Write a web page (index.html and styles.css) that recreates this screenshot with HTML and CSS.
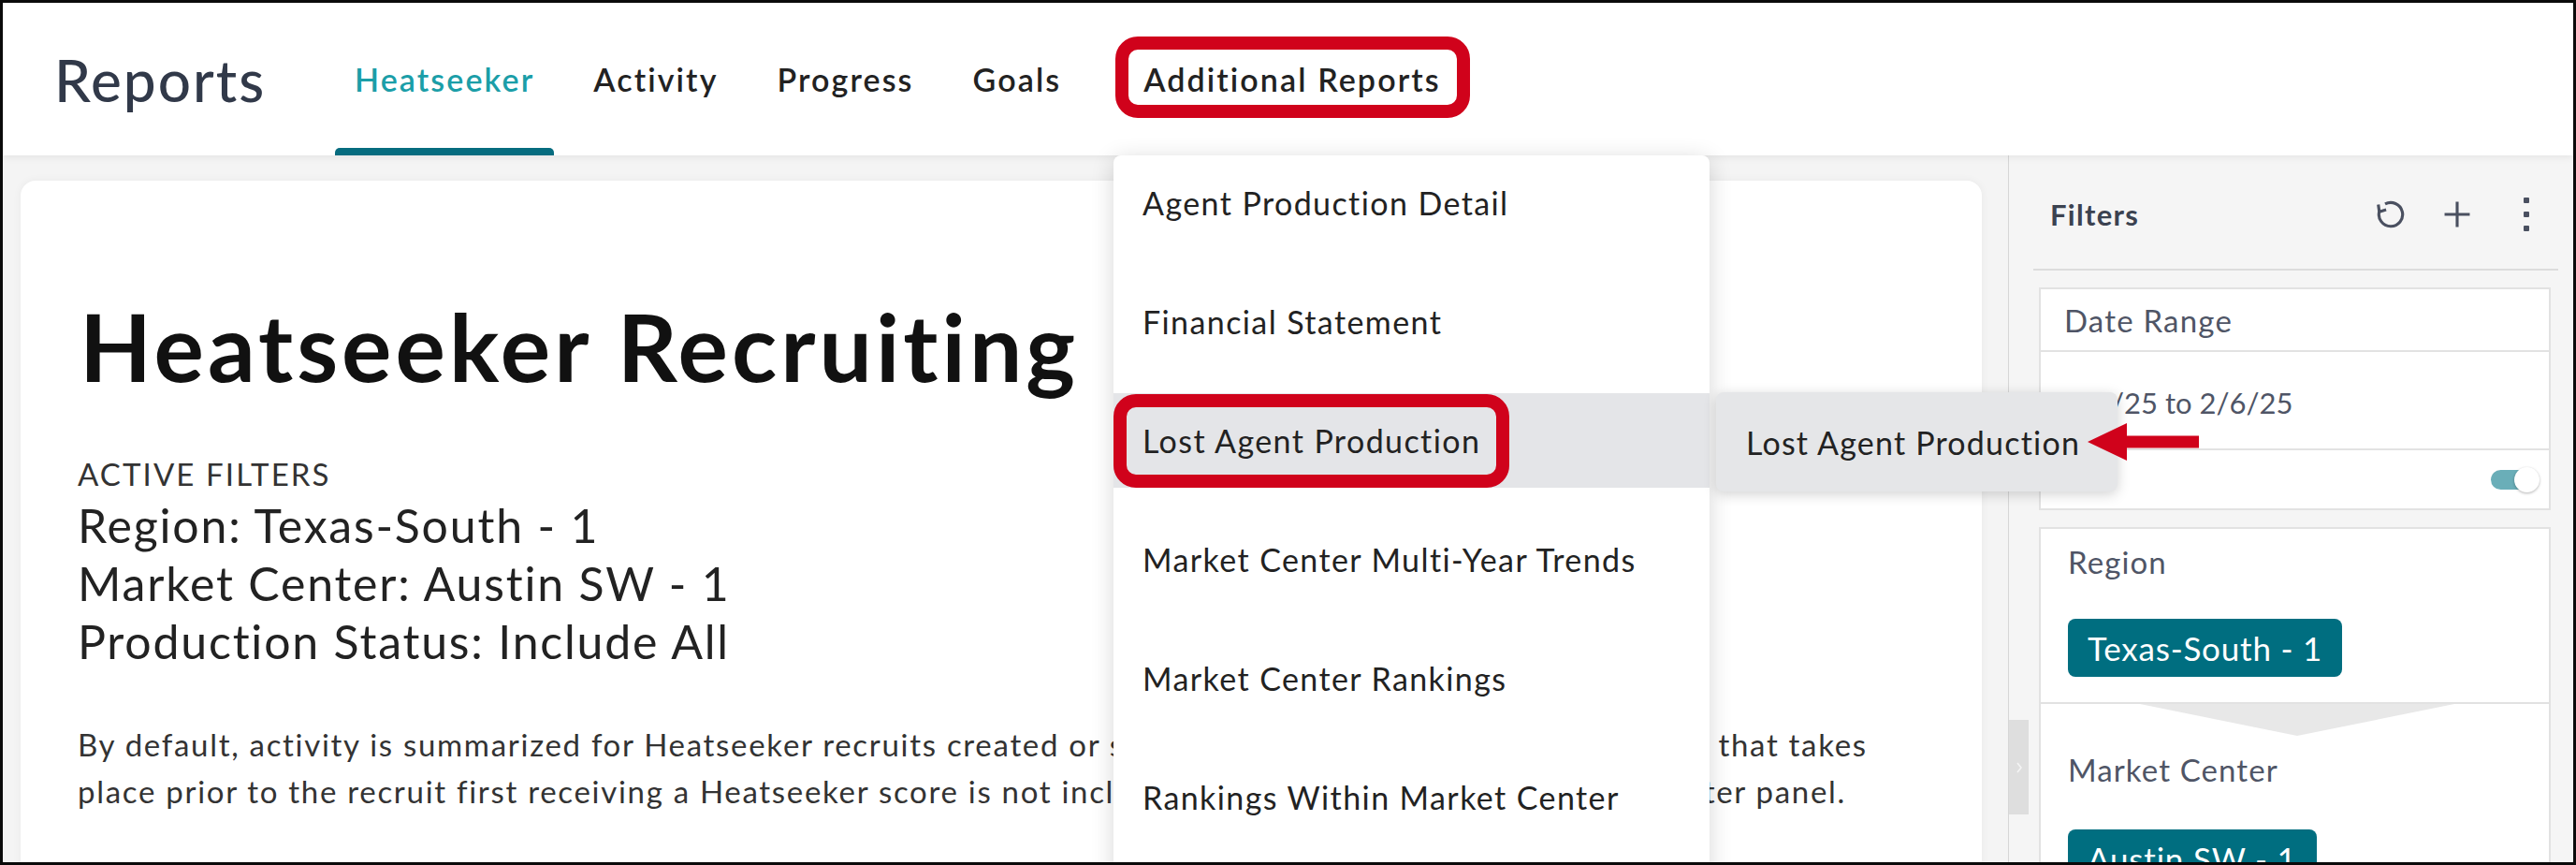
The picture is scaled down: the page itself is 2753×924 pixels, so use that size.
FILE: index.html
```html
<!DOCTYPE html>
<html lang="en">
<head>
<meta charset="utf-8">
<title>Reports - Heatseeker</title>
<link rel="stylesheet" href="styles.css">
</head>
<body>
<div class="frame">
  <header class="topbar">
    <div class="brand">Reports</div>
    <nav class="tabs">
      <a class="tab active">Heatseeker</a>
      <a class="tab">Activity</a>
      <a class="tab">Progress</a>
      <a class="tab">Goals</a>
      <a class="tab tab-more">Additional Reports</a>
    </nav>
  </header>
  <div class="main">
    <main class="content">
      <section class="card">
        <h1 class="title">Heatseeker Recruiting</h1>
        <div class="active-label">ACTIVE FILTERS</div>
        <div class="active-list">
          <div>Region: Texas-South - 1</div>
          <div>Market Center: Austin SW - 1</div>
          <div>Production Status: Include All</div>
        </div>
        <p class="note">By default, activity is summarized for Heatseeker recruits created or scored within their date ranges. Activity that takes<br>place prior to the recruit first receiving a Heatseeker score is not included. To change this setting, use the filter panel.</p>
      </section>
    </main>
    <aside class="filters">
      <div class="filters-head">
        <span class="filters-title">Filters</span>
        <div class="filters-tools">
          <svg class="ic-refresh" viewBox="0 0 24 24" aria-hidden="true"><path d="M8.2 5 A8 8 0 1 1 4.3 9.9" fill="none" stroke="#4a5060" stroke-width="2"/><path d="M3.6 5.4 L4.3 10.2 L8.9 8.9" fill="none" stroke="#4a5060" stroke-width="2" stroke-linejoin="round"/></svg>
          <svg class="ic-plus" viewBox="0 0 24 24" aria-hidden="true"><path d="M12 2.5 V21.5 M2.5 12 H21.5" stroke="#4a5060" stroke-width="2.2"/></svg>
          <svg class="ic-kebab" viewBox="0 0 8 36" aria-hidden="true"><rect x="1" y="0" width="6" height="6" rx="1" fill="#4a5060"/><rect x="1" y="15" width="6" height="6" rx="1" fill="#4a5060"/><rect x="1" y="30" width="6" height="6" rx="1" fill="#4a5060"/></svg>
        </div>
      </div>
      <div class="fcard">
        <div class="fc-label">Date Range</div>
        <div class="fc-value">1/1/25 to 2/6/25</div>
        <div class="fc-toggle"><span class="toggle"><span class="knob"></span></span></div>
      </div>
      <div class="fcard">
        <div class="fc-sec fc-region">
          <div class="fc-name">Region</div>
          <span class="chip">Texas-South - 1</span>
        </div>
        <div class="fc-sec fc-market">
          <div class="fc-name">Market Center</div>
          <span class="chip">Austin SW - 1</span>
        </div>
      </div>
      <div class="handle"><svg viewBox="0 0 10 20" aria-hidden="true"><path d="M3 5 L7 10 L3 15" fill="none" stroke="#f4f4f4" stroke-width="1.6"/></svg></div>
    </aside>
  </div>

  <div class="dropdown">
    <div class="dd-item">Agent Production Detail</div>
    <div class="dd-item">Financial Statement</div>
    <div class="dd-item hover">Lost Agent Production</div>
    <div class="dd-item">Market Center Multi-Year Trends</div>
    <div class="dd-item">Market Center Rankings</div>
    <div class="dd-item">Rankings Within Market Center</div>
  </div>
  <div class="submenu">Lost Agent Production</div>

  <div class="callout callout-nav"></div>
  <div class="callout callout-item"></div>
  <svg class="arrow" viewBox="0 0 119 40" aria-hidden="true"><polygon points="0,20 42,0 42,13.5 119,13.5 119,26.5 42,26.5 42,40" fill="#d0021b"/></svg>
</div>
</body>
</html>
```
FILE: styles.css
```css
* { box-sizing: border-box; }
html, body { margin: 0; padding: 0; }
body {
  width: 2753px;
  height: 924px;
  overflow: hidden;
  font-family: "Lato", "Liberation Sans", sans-serif;
  color: #222;
  background: #000;
}
.frame {
  position: relative;
  width: 2753px;
  height: 924px;
  border: 3px solid #0a0a0a;
  background: #f4f4f4;
  overflow: hidden;
  display: flex;
  flex-direction: column;
}

/* header */
.topbar {
  height: 163px;
  flex: none;
  background: #fff;
  display: flex;
  align-items: stretch;
  box-shadow: 0 2px 8px rgba(0,0,0,0.07);
  position: relative;
  z-index: 2;
}
.brand {
  width: 355px;
  padding-left: 55px;
  display: flex;
  align-items: center;
  font-size: 62px;
  font-weight: 500;
  letter-spacing: 2px;
  color: #313949;
}
.tabs { display: flex; gap: 21px; }
.tab {
  position: relative;
  padding: 0 21px;
  display: flex;
  align-items: center;
  font-size: 34px;
  font-weight: 600;
  letter-spacing: 2.1px;
  color: #222;
}
.tab.active { color: #1b9ea8; }
.tab.active::after {
  content: "";
  position: absolute;
  left: 0; right: 0; bottom: 0;
  height: 8px;
  background: #066c7f;
  border-radius: 5px 5px 0 0;
}
.tab-more { margin-left: 25px; }

/* main */
.main { flex: 1; display: flex; min-height: 0; }
.content { flex: 1; padding: 27px 28px 0 19px; min-width: 0; }
.card {
  background: #fff;
  border-radius: 16px;
  height: 800px;
  padding: 116px 0 0 61px;
  box-shadow: 0 0 10px rgba(0,0,0,0.05);
}
.title {
  margin: 0 0 0 2px;
  font-size: 100px;
  font-weight: 700;
  letter-spacing: 4px;
  line-height: 1.2;
  color: #111;
}
.active-label {
  margin-top: 58px;
  font-size: 33px;
  letter-spacing: 2.1px;
  line-height: 1.2;
  color: #333;
}
.active-list {
  margin-top: 3px;
  font-size: 50px;
  letter-spacing: 1.8px;
  line-height: 62px;
  color: #222;
}
.note {
  margin: 54px 0 0;
  font-size: 33px;
  letter-spacing: 1.7px;
  line-height: 50px;
  color: #333;
  white-space: nowrap;
}

/* filters */
.filters {
  width: 604px;
  flex: none;
  border-left: 1px solid #d6d6d6;
  background: #f5f5f5;
  padding: 0 16px 0 26px;
  position: relative;
}
.filters-head {
  height: 123px;
  border-bottom: 2px solid #dcdcdc;
  display: flex;
  align-items: center;
  padding: 4px 30px 0 18px;
}
.filters-title { font-size: 31px; font-weight: 700; letter-spacing: 1.3px; color: #3b4250; }
.filters-tools { margin-left: auto; display: flex; align-items: center; }
.ic-refresh { width: 38px; height: 38px; }
.ic-plus { width: 34px; height: 34px; margin-left: 35px; }
.ic-kebab { width: 8px; height: 36px; margin-left: 53px; }

.fcard {
  margin: 18px 8px 0 6px;
  background: #fff;
  border: 2px solid #e2e2e2;
}
.fc-label {
  height: 67px;
  border-bottom: 2px solid #e2e2e2;
  display: flex;
  align-items: center;
  padding-left: 25px;
  font-size: 33px;
  letter-spacing: 1.2px;
  color: #4f5566;
}
.fc-value {
  height: 105px;
  border-bottom: 2px solid #e2e2e2;
  display: flex;
  align-items: center;
  padding: 5px 0 0 25px;
  font-size: 31px;
  color: #4f5566;
}
.fc-toggle {
  height: 62px;
  display: flex;
  align-items: center;
  justify-content: flex-end;
  padding-right: 12px;
}
.toggle {
  position: relative;
  width: 50px;
  height: 21px;
  border-radius: 11px;
  background: #6aaeb8;
}
.knob {
  position: absolute;
  right: -2px;
  top: -3px;
  width: 27px;
  height: 27px;
  border-radius: 50%;
  background: #fff;
  box-shadow: 0 1px 3px rgba(0,0,0,0.3);
}
.fc-sec { position: relative; padding-left: 29px; }
.fc-region { padding-top: 17px; padding-bottom: 27px; border-bottom: 2px solid #e2e2e2; }
.fc-market { padding-top: 52px; height: 300px; }
.fc-market::before {
  content: "";
  position: absolute;
  top: 0;
  left: 106px;
  width: 336px;
  height: 34px;
  background: #e8e8e8;
  clip-path: polygon(0 0, 100% 0, 50% 100%);
}
.fc-name {
  font-size: 33px;
  letter-spacing: 1.1px;
  line-height: 37px;
  color: #4f5566;
  position: relative;
}
.chip {
  display: inline-flex;
  align-items: center;
  height: 62px;
  padding: 0 21px;
  margin-top: 42px;
  border-radius: 8px;
  background: #006e80;
  color: #fff;
  font-size: 35px;
  letter-spacing: 0.8px;
}
.fc-market .chip { margin-top: 45px; }
.handle {
  position: absolute;
  left: 0;
  top: 603px;
  width: 21px;
  height: 101px;
  background: #dedede;
  display: flex;
  align-items: center;
  justify-content: center;
}
.handle svg { width: 10px; height: 20px; }

/* overlays */
.dropdown {
  position: absolute;
  left: 1187px;
  top: 163px;
  width: 637px;
  height: 800px;
  background: #fff;
  border-radius: 8px;
  box-shadow: 0 4px 24px rgba(0,0,0,0.16);
  z-index: 5;
  display: flex;
  flex-direction: column;
  gap: 26px;
}
.dd-item {
  height: 101px;
  flex: none;
  display: flex;
  align-items: center;
  padding-left: 31px;
  font-size: 34px;
  letter-spacing: 1.4px;
  color: #222;
}
.dd-item.hover { background: #e4e5e8; }
.submenu {
  position: absolute;
  left: 1831px;
  top: 416px;
  width: 429px;
  height: 106px;
  background: #e5e6e8;
  border-radius: 8px;
  box-shadow: 0 3px 14px rgba(0,0,0,0.18);
  z-index: 6;
  display: flex;
  align-items: center;
  padding-left: 32px;
  font-size: 34px;
  letter-spacing: 1.2px;
  color: #222;
}
.callout {
  position: absolute;
  border: 14px solid #d0021b;
  border-radius: 24px;
  z-index: 7;
}
.callout-nav { left: 1189px; top: 36px; width: 379px; height: 87px; }
.callout-item { left: 1187px; top: 418px; width: 423px; height: 100px; }
.arrow {
  position: absolute;
  left: 2228px;
  top: 449px;
  width: 119px;
  height: 40px;
  z-index: 7;
}
```
